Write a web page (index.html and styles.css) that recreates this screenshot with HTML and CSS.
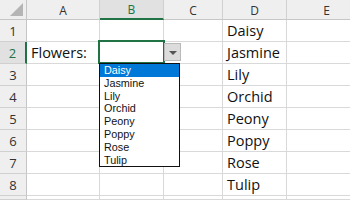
FILE: index.html
```html
<!DOCTYPE html>
<html lang="en">

<head>
  <meta charset="UTF-8" />
  <title>Flowers dropdown</title>
  <link rel="stylesheet" href="styles.css">
</head>

<body>
  <div class="sheet">
    <div class="grid">
      <div class="corner"><span class="corner-tri"></span></div>
      <div class="col-head">A</div>
      <div class="col-head active">B</div>
      <div class="col-head">C</div>
      <div class="col-head">D</div>
      <div class="col-head">E</div>

      <div class="row-head">1</div>
      <div class="cell"></div><div class="cell"></div><div class="cell"></div>
      <div class="cell">Daisy</div><div class="cell"></div>

      <div class="row-head active">2</div>
      <div class="cell">Flowers:</div><div class="cell"></div><div class="cell"></div>
      <div class="cell">Jasmine</div><div class="cell"></div>

      <div class="row-head">3</div>
      <div class="cell"></div><div class="cell"></div><div class="cell"></div>
      <div class="cell">Lily</div><div class="cell"></div>

      <div class="row-head">4</div>
      <div class="cell"></div><div class="cell"></div><div class="cell"></div>
      <div class="cell">Orchid</div><div class="cell"></div>

      <div class="row-head">5</div>
      <div class="cell"></div><div class="cell"></div><div class="cell"></div>
      <div class="cell">Peony</div><div class="cell"></div>

      <div class="row-head">6</div>
      <div class="cell"></div><div class="cell"></div><div class="cell"></div>
      <div class="cell">Poppy</div><div class="cell"></div>

      <div class="row-head">7</div>
      <div class="cell"></div><div class="cell"></div><div class="cell"></div>
      <div class="cell">Rose</div><div class="cell"></div>

      <div class="row-head">8</div>
      <div class="cell"></div><div class="cell"></div><div class="cell"></div>
      <div class="cell">Tulip</div><div class="cell"></div>

      <!-- row 9 only peeks in at the bottom edge -->
      <div class="row-head"></div>
      <div class="cell"></div><div class="cell"></div><div class="cell"></div>
      <div class="cell"></div><div class="cell"></div>
    </div>

    <!-- overlays: selection box, dropdown arrow and open list -->
    <div class="selection"></div>
    <div class="drop-btn"><span class="drop-tri"></span></div>
    <ul class="drop-list">
      <li class="picked">Daisy</li>
      <li>Jasmine</li>
      <li>Lily</li>
      <li>Orchid</li>
      <li>Peony</li>
      <li>Poppy</li>
      <li>Rose</li>
      <li>Tulip</li>
    </ul>
  </div>
</body>

</html>
```

FILE: styles.css
```css
* {
  box-sizing: border-box;
}

html,
body {
  margin: 0;
  padding: 0;
  background: #fff;
  overflow: hidden;
}

.sheet {
  position: relative;
  width: 350px;
  height: 200px;
  overflow: hidden;
  font-family: "Open Sans", "Noto Sans", sans-serif;
  color: #111;
}

.grid {
  display: grid;
  grid-template-columns: 27px 73px 64px 59px 64px 80px;
  grid-template-rows: 20px repeat(8, 22px) 4px;
}

.corner {
  background: #efefef;
  border-right: 1px solid #c6c6c6;
  border-bottom: 1px solid #c6c6c6;
  position: relative;
}

.corner-tri {
  position: absolute;
  right: 3px;
  bottom: 3px;
  width: 0;
  height: 0;
  border-left: 13px solid transparent;
  border-bottom: 13px solid #b5b5b5;
}

.col-head {
  background: #efefef;
  border-right: 1px solid #d0d0d0;
  border-bottom: 1px solid #c6c6c6;
  display: flex;
  align-items: center;
  justify-content: center;
  font-size: 12px;
  color: #333;
  padding-top: 1px;
}

.col-head.active {
  background: #e1e1e1;
  border-bottom: 2px solid #217346;
  color: #217346;
}

.row-head {
  background: #efefef;
  border-right: 1px solid #c6c6c6;
  border-bottom: 1px solid #d0d0d0;
  display: flex;
  align-items: center;
  justify-content: center;
  font-size: 13px;
  color: #333;
  padding-top: 1px;
}

.row-head.active {
  background: #e1e1e1;
  border-right: 2px solid #217346;
  color: #217346;
}

.cell {
  border-right: 1px solid #d9d9d9;
  border-bottom: 1px solid #d9d9d9;
  font-size: 14.5px;
  line-height: 20px;
  padding: 1px 0 0 4px;
  white-space: nowrap;
}

.selection {
  position: absolute;
  left: 98px;
  top: 40px;
  width: 67px;
  height: 24px;
  border: 2px solid #217346;
}

.drop-btn {
  position: absolute;
  left: 164px;
  top: 43px;
  width: 17px;
  height: 18px;
  background: #dcdcdc;
  border: 1px solid #b9b9b9;
  display: flex;
  align-items: center;
  justify-content: center;
}

.drop-tri {
  width: 0;
  height: 0;
  border-left: 4px solid transparent;
  border-right: 4px solid transparent;
  border-top: 4px solid #555;
  margin-top: 1px;
}

.drop-list {
  position: absolute;
  left: 99px;
  top: 63px;
  width: 81px;
  margin: 0;
  padding: 0;
  list-style: none;
  background: #fff;
  border: 1px solid #111;
  font-family: "Liberation Sans", Arial, sans-serif;
  font-size: 10.8px;
}

.drop-list li {
  height: 12.8px;
  line-height: 12.8px;
  padding-left: 4px;
  color: #111;
}

.drop-list li.picked {
  background: #0078d7;
  color: #fff;
}
```
